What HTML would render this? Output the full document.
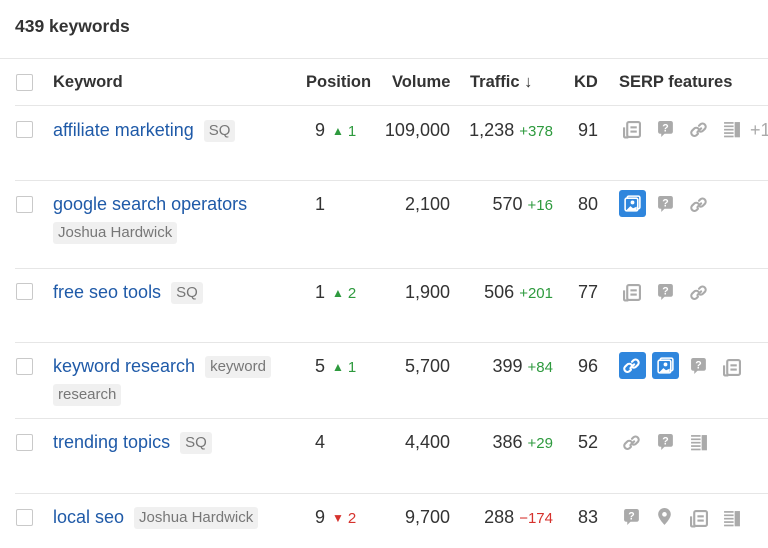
<!DOCTYPE html>
<html><head><meta charset="utf-8"><style>
*{margin:0;padding:0;box-sizing:border-box}
body{width:768px;height:548px;background:#fff;font-family:"Liberation Sans",sans-serif;color:#333;position:relative;overflow:hidden}
.a{position:absolute;white-space:nowrap;font-size:18px;line-height:20px}
.h{font-weight:bold;color:#333;font-size:16.5px}
.hl{position:absolute;height:1px;background:#e6e6e6}
.cb{position:absolute;left:16px;width:17px;height:17px;border:1px solid #c9c9c9;border-radius:2px;background:#fff}
.kw{color:#1f5aa8}
.tag{display:inline-block;background:#f0f0f0;color:#777;font-size:15px;line-height:22px;padding:0 5px;border-radius:3px;margin-left:10px;vertical-align:1px}
.tg2{position:absolute;background:#f0f0f0;color:#777;font-size:15px;line-height:22px;padding:0 5px;border-radius:3px;white-space:nowrap}
.g{color:#2e9a3e;font-size:15px}
.r{color:#d6322d;font-size:15px}
.t{font-size:12px;vertical-align:1px;margin:0 4px 0 2px}
.num{text-align:right}
svg{position:absolute}
.bb{position:absolute;width:27px;height:27px;background:#2f86dd;border-radius:3px}
</style></head><body>
<svg width="0" height="0" style="position:absolute"><defs>
<g id="news"><rect x="4" y="1" width="12" height="14" rx="1.5" fill="none" stroke="#aaa" stroke-width="2"/><path d="M1 6v8.5a1 1 0 0 0 1 1H5" fill="none" stroke="#aaa" stroke-width="2"/><rect x="7" y="5" width="6" height="2" fill="#aaa"/><rect x="7" y="9" width="6" height="2" fill="#aaa"/></g>
<g id="q"><rect x="1" y="1" width="14" height="12" rx="2" fill="#aaa"/><path d="M4 12l0 4 4-4z" fill="#aaa"/><text x="8" y="11" font-size="10" font-weight="bold" fill="#fff" text-anchor="middle" font-family="Liberation Sans">?</text></g>
<g id="lk"><path d="M7 10.5l3.5-3.5M8.5 4.5l1.5-1.5a3 3 0 0 1 4.2 4.2l-2 2a3 3 0 0 1-4.2 0M7.5 12l-1.5 1.5a3 3 0 0 1-4.2-4.2l2-2a3 3 0 0 1 4.2 0" fill="none" stroke="#aaa" stroke-width="2" stroke-linecap="round"/></g>
<g id="ls"><rect x="1" y="1" width="9" height="1.6" fill="#aaa"/><rect x="1" y="4.2" width="9" height="1.6" fill="#aaa"/><rect x="1" y="7.4" width="9" height="1.6" fill="#aaa"/><rect x="1" y="10.6" width="9" height="1.6" fill="#aaa"/><rect x="1" y="13.8" width="9" height="1.6" fill="#aaa"/><rect x="11" y="1" width="5" height="14.4" fill="#aaa"/></g>
<g id="img"><rect x="4" y="2" width="12" height="12" rx="1.5" fill="none" stroke="#fff" stroke-width="1.5"/><rect x="2" y="4" width="12" height="12" rx="1.5" fill="#2f86dd" stroke="#fff" stroke-width="1.5"/><circle cx="9" cy="8" r="1.8" fill="#fff"/><path d="M3 15.5l4-4 2.5 2 3.5-1.5v3.5z" fill="#fff"/></g>
<g id="lkw"><path d="M7 10.5l3.5-3.5M8.5 4.5l1.5-1.5a3 3 0 0 1 4.2 4.2l-2 2a3 3 0 0 1-4.2 0M7.5 12l-1.5 1.5a3 3 0 0 1-4.2-4.2l2-2a3 3 0 0 1 4.2 0" fill="none" stroke="#fff" stroke-width="2" stroke-linecap="round"/></g>
<g id="pin"><path d="M8 1a6 6 0 0 1 6 6c0 4-6 10-6 10S2 11 2 7a6 6 0 0 1 6-6z" fill="#aaa"/><circle cx="8" cy="7" r="2.2" fill="#fff"/></g>
</defs></svg>

<div class="a h" style="left:15px;top:16px;font-size:17.5px">439 keywords</div>
<div class="hl" style="left:0;top:58px;width:768px"></div>

<div class="cb" style="top:74px"></div>
<div class="a h" style="left:53px;top:72px">Keyword</div>
<div class="a h" style="left:306px;top:72px">Position</div>
<div class="a h" style="left:392px;top:72px">Volume</div>
<div class="a h" style="left:470px;top:72px">Traffic <span style="font-weight:normal">&#8595;</span></div>
<div class="a h" style="left:574px;top:72px">KD</div>
<div class="a h" style="left:619px;top:72px">SERP features</div>
<div class="hl" style="left:15px;top:105px;width:753px"></div>

<!-- row1 -->
<div class="cb" style="top:121px"></div>
<div class="a" style="left:53px;top:120px"><span class="kw">affiliate marketing</span><span class="tag">SQ</span></div>
<div class="a" style="left:315px;top:120px">9 <span class="g"><span class="t">&#9650;</span>1</span></div>
<div class="a num" style="right:318px;top:120px">109,000</div>
<div class="a num" style="right:215px;top:120px">1,238 <span class="g">+378</span></div>
<div class="a" style="left:578px;top:120px">91</div>
<svg style="left:623px;top:121px" width="18" height="18" viewBox="0 0 17 17"><use href="#news"/></svg>
<svg style="left:657px;top:120px" width="18" height="18" viewBox="0 0 17 17"><use href="#q"/></svg>
<svg style="left:690px;top:121px" width="18" height="18" viewBox="0 0 17 17"><use href="#lk"/></svg>
<svg style="left:723px;top:121px" width="18" height="18" viewBox="0 0 17 17"><use href="#ls"/></svg>
<div class="a" style="left:750px;top:120px;color:#aaa">+1</div>
<div class="hl" style="left:15px;top:180px;width:753px"></div>

<!-- row2 -->
<div class="cb" style="top:196px"></div>
<div class="a kw" style="left:53px;top:194px">google search operators</div>
<div class="tg2" style="left:53px;top:222px">Joshua Hardwick</div>
<div class="a" style="left:315px;top:194px">1</div>
<div class="a num" style="right:318px;top:194px">2,100</div>
<div class="a num" style="right:215px;top:194px">570 <span class="g">+16</span></div>
<div class="a" style="left:578px;top:194px">80</div>
<div class="bb" style="left:619px;top:190px"></div>
<svg style="left:623px;top:194px" width="19" height="19" viewBox="0 0 18 18"><use href="#img"/></svg>
<svg style="left:657px;top:195px" width="18" height="18" viewBox="0 0 17 17"><use href="#q"/></svg>
<svg style="left:690px;top:196px" width="18" height="18" viewBox="0 0 17 17"><use href="#lk"/></svg>
<div class="hl" style="left:15px;top:268px;width:753px"></div>

<!-- row3 -->
<div class="cb" style="top:283px"></div>
<div class="a" style="left:53px;top:282px"><span class="kw">free seo tools</span><span class="tag">SQ</span></div>
<div class="a" style="left:315px;top:282px">1 <span class="g"><span class="t">&#9650;</span>2</span></div>
<div class="a num" style="right:318px;top:282px">1,900</div>
<div class="a num" style="right:215px;top:282px">506 <span class="g">+201</span></div>
<div class="a" style="left:578px;top:282px">77</div>
<svg style="left:623px;top:284px" width="18" height="18" viewBox="0 0 17 17"><use href="#news"/></svg>
<svg style="left:657px;top:283px" width="18" height="18" viewBox="0 0 17 17"><use href="#q"/></svg>
<svg style="left:690px;top:284px" width="18" height="18" viewBox="0 0 17 17"><use href="#lk"/></svg>
<div class="hl" style="left:15px;top:342px;width:753px"></div>

<!-- row4 -->
<div class="cb" style="top:358px"></div>
<div class="a" style="left:53px;top:356px"><span class="kw">keyword research</span><span class="tag">keyword</span></div>
<div class="tg2" style="left:53px;top:384px">research</div>
<div class="a" style="left:315px;top:356px">5 <span class="g"><span class="t">&#9650;</span>1</span></div>
<div class="a num" style="right:318px;top:356px">5,700</div>
<div class="a num" style="right:215px;top:356px">399 <span class="g">+84</span></div>
<div class="a" style="left:578px;top:356px">96</div>
<div class="bb" style="left:619px;top:352px"></div>
<svg style="left:623px;top:357px" width="18" height="18" viewBox="0 0 17 17"><use href="#lkw"/></svg>
<div class="bb" style="left:652px;top:352px"></div>
<svg style="left:656px;top:356px" width="19" height="19" viewBox="0 0 18 18"><use href="#img"/></svg>
<svg style="left:690px;top:357px" width="18" height="18" viewBox="0 0 17 17"><use href="#q"/></svg>
<svg style="left:723px;top:359px" width="18" height="18" viewBox="0 0 17 17"><use href="#news"/></svg>
<div class="hl" style="left:15px;top:418px;width:753px"></div>

<!-- row5 -->
<div class="cb" style="top:434px"></div>
<div class="a" style="left:53px;top:432px"><span class="kw">trending topics</span><span class="tag">SQ</span></div>
<div class="a" style="left:315px;top:432px">4</div>
<div class="a num" style="right:318px;top:432px">4,400</div>
<div class="a num" style="right:215px;top:432px">386 <span class="g">+29</span></div>
<div class="a" style="left:578px;top:432px">52</div>
<svg style="left:623px;top:434px" width="18" height="18" viewBox="0 0 17 17"><use href="#lk"/></svg>
<svg style="left:657px;top:433px" width="18" height="18" viewBox="0 0 17 17"><use href="#q"/></svg>
<svg style="left:690px;top:434px" width="18" height="18" viewBox="0 0 17 17"><use href="#ls"/></svg>
<div class="hl" style="left:15px;top:493px;width:753px"></div>

<!-- row6 -->
<div class="cb" style="top:509px"></div>
<div class="a" style="left:53px;top:507px"><span class="kw">local seo</span><span class="tag">Joshua Hardwick</span></div>
<div class="a" style="left:315px;top:507px">9 <span class="r"><span class="t">&#9660;</span>2</span></div>
<div class="a num" style="right:318px;top:507px">9,700</div>
<div class="a num" style="right:215px;top:507px">288 <span class="r">&#8722;174</span></div>
<div class="a" style="left:578px;top:507px">83</div>
<svg style="left:623px;top:508px" width="18" height="18" viewBox="0 0 17 17"><use href="#q"/></svg>
<svg style="left:656px;top:507px" width="18" height="20" viewBox="0 0 17 19"><use href="#pin"/></svg>
<svg style="left:690px;top:510px" width="18" height="18" viewBox="0 0 17 17"><use href="#news"/></svg>
<svg style="left:723px;top:510px" width="18" height="18" viewBox="0 0 17 17"><use href="#ls"/></svg>
</body></html>
